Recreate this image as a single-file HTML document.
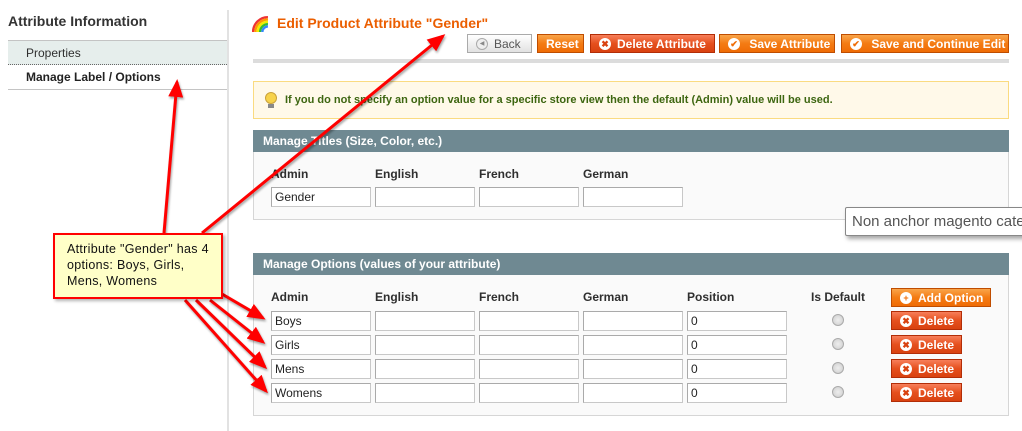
<!DOCTYPE html>
<html><head><meta charset="utf-8"><style>
*{margin:0;padding:0;box-sizing:border-box}
body{width:1022px;height:431px;overflow:hidden;background:#fff;font-family:"Liberation Sans",Arial,sans-serif;position:relative}
.a{position:absolute}
.b{font-weight:bold}
.btn{position:absolute;top:34px;height:19px;border:1px solid #bf4d00;background:linear-gradient(#f9a54a,#f47b14 50%,#ef6c05);color:#fff;font-weight:bold;font-size:12px;padding-left:8px;white-space:nowrap;display:flex;align-items:center}
.red{background:linear-gradient(#f77f5a,#e5501e 50%,#d94210);border-color:#b22d07}
.ic{display:inline-block;flex:none;width:12px;height:12px;border-radius:50%;background:#fff;margin-right:6px;color:#ef6c05;font-size:9px;line-height:12px;text-align:center}
.hd{position:absolute;left:253px;width:756px;height:22px;background:#6f8992;color:#fff;font-weight:bold;font-size:12px;line-height:22px;padding-left:10px}
.bd{position:absolute;left:253px;width:756px;background:#fafafa;border:1px solid #d6d6d6;border-top:none}
.l{position:absolute;font-size:12px;font-weight:bold;color:#2f2f2f}
.in{position:absolute;height:20px;width:100px;border:1px solid #aaa;border-color:#aaa #c8c8c8 #c8c8c8 #aaa;background:#fff;font-size:12px;line-height:18px;padding-left:3px;color:#222}
.rd{position:absolute;width:12px;height:12px;border-radius:50%;border:1px solid #aaa;background:radial-gradient(#eee,#ccc)}
</style></head><body>
<div class="a" style="left:227px;top:10px;width:2px;height:421px;background:#e2e2e2"></div>
<div class="a b" style="left:8px;top:13px;font-size:14px;color:#333">Attribute Information</div>
<div class="a" style="left:8px;top:40px;width:219px;height:25px;background:#e6eeec;border-top:1px solid #c4c4c4;border-bottom:1px dotted #666;font-size:12px;line-height:24px;padding-left:18px;color:#2f2f2f">Properties</div>
<div class="a b" style="left:8px;top:65px;width:219px;height:25px;border-bottom:1px solid #c4c4c4;font-size:12px;line-height:25px;padding-left:18px;color:#222">Manage Label / Options</div>

<svg class="a" style="left:252px;top:15px" width="17" height="17" viewBox="0 0 16 16"><g fill="none" stroke-width="2.2"><path d="M1 16A14 14 0 0 1 15 2" stroke="#e33"/><path d="M3.2 16A11.8 11.8 0 0 1 15 4.2" stroke="#f90"/><path d="M5.4 16A9.6 9.6 0 0 1 15 6.4" stroke="#ee0"/><path d="M7.6 16A7.4 7.4 0 0 1 15 8.6" stroke="#3b3"/><path d="M9.8 16A5.2 5.2 0 0 1 15 10.8" stroke="#38f"/></g></svg>
<div class="a b" style="left:277px;top:15px;font-size:14px;color:#eb5e00">Edit Product Attribute "Gender"</div>

<div class="btn" style="left:467px;width:65px;background:linear-gradient(#fff,#e2e2e2);border-color:#aaa;color:#555;font-weight:normal"><span class="ic" style="border:1px solid #aaa;background:#eee;color:#888;font-size:6px;line-height:10px">◀</span>Back</div>
<div class="btn" style="left:537px;width:47px">Reset</div>
<div class="btn red" style="left:590px;width:125px"><span class="ic" style="color:#d94210">✖</span>Delete Attribute</div>
<div class="btn" style="left:719px;width:116px"><span class="ic">✔</span>&nbsp;Save Attribute</div>
<div class="btn" style="left:841px;width:168px"><span class="ic">✔</span>&nbsp;Save and Continue Edit</div>
<div class="a" style="left:253px;top:59px;width:756px;height:4px;background:#dcdcdc"></div>

<div class="a" style="left:253px;top:81px;width:756px;height:38px;background:#fff9e9;border:1px solid #fadb81"></div>
<div class="a" style="left:265px;top:92px;width:12px;height:12px;border-radius:50%;background:#f7d24a;border:1px solid #c9a13a"></div>
<div class="a" style="left:268px;top:104px;width:6px;height:4px;background:#888"></div>
<div class="a b" style="left:285px;top:94px;font-size:11px;color:#3d6611">If you do not specify an option value for a specific store view then the default (Admin) value will be used.</div>

<div class="hd" style="top:130px">Manage Titles (Size, Color, etc.)</div>
<div class="bd" style="top:152px;height:68px"></div>
<div class="l" style="left:271px;top:167px">Admin</div><div class="l" style="left:375px;top:167px">English</div><div class="l" style="left:479px;top:167px">French</div><div class="l" style="left:583px;top:167px">German</div>
<div class="in" style="left:271px;top:187px">Gender</div><div class="in" style="left:375px;top:187px"></div><div class="in" style="left:479px;top:187px"></div><div class="in" style="left:583px;top:187px"></div>

<div class="a" style="left:845px;top:207px;width:190px;height:29px;background:#fff;border:1px solid #888;border-radius:2px;box-shadow:2px 3px 4px rgba(0,0,0,.35);font-size:15px;line-height:27px;padding-left:6px;color:#555;white-space:nowrap">Non anchor magento cate</div>

<div class="hd" style="top:253px">Manage Options (values of your attribute)</div>
<div class="bd" style="top:275px;height:141px"></div>
<div class="l" style="left:271px;top:290px">Admin</div><div class="l" style="left:375px;top:290px">English</div><div class="l" style="left:479px;top:290px">French</div><div class="l" style="left:583px;top:290px">German</div><div class="l" style="left:687px;top:290px">Position</div><div class="l" style="left:811px;top:290px">Is Default</div>
<div class="btn" style="left:891px;top:288px;width:100px"><span class="ic">+</span>Add Option</div>

<div class="in" style="left:271px;top:311px">Boys</div><div class="in" style="left:375px;top:311px"></div><div class="in" style="left:479px;top:311px"></div><div class="in" style="left:583px;top:311px"></div><div class="in" style="left:687px;top:311px">0</div><div class="rd" style="left:832px;top:314px"></div><div class="btn red" style="left:891px;top:311px;width:71px"><span class="ic" style="color:#d94210">✖</span>Delete</div>
<div class="in" style="left:271px;top:335px">Girls</div><div class="in" style="left:375px;top:335px"></div><div class="in" style="left:479px;top:335px"></div><div class="in" style="left:583px;top:335px"></div><div class="in" style="left:687px;top:335px">0</div><div class="rd" style="left:832px;top:338px"></div><div class="btn red" style="left:891px;top:335px;width:71px"><span class="ic" style="color:#d94210">✖</span>Delete</div>
<div class="in" style="left:271px;top:359px">Mens</div><div class="in" style="left:375px;top:359px"></div><div class="in" style="left:479px;top:359px"></div><div class="in" style="left:583px;top:359px"></div><div class="in" style="left:687px;top:359px">0</div><div class="rd" style="left:832px;top:362px"></div><div class="btn red" style="left:891px;top:359px;width:71px"><span class="ic" style="color:#d94210">✖</span>Delete</div>
<div class="in" style="left:271px;top:383px">Womens</div><div class="in" style="left:375px;top:383px"></div><div class="in" style="left:479px;top:383px"></div><div class="in" style="left:583px;top:383px"></div><div class="in" style="left:687px;top:383px">0</div><div class="rd" style="left:832px;top:386px"></div><div class="btn red" style="left:891px;top:383px;width:71px"><span class="ic" style="color:#d94210">✖</span>Delete</div>

<svg class="a" style="left:0;top:0" width="1022" height="431">
<defs><marker id="h" markerWidth="6" markerHeight="5" refX="5" refY="2.5" orient="auto" markerUnits="strokeWidth"><path d="M0 0L6 2.5L0 5z" fill="#f00"/></marker></defs>
<g stroke="#f00" stroke-width="3" fill="none" marker-end="url(#h)" style="filter:drop-shadow(1px 2px 1px rgba(0,0,0,.35))">
<line x1="164" y1="233" x2="177" y2="82"/>
<line x1="202" y1="233" x2="443" y2="36"/>
<line x1="222" y1="294" x2="263" y2="318"/>
<line x1="210" y1="300" x2="263" y2="342"/>
<line x1="196" y1="300" x2="265" y2="367"/>
<line x1="185" y1="300" x2="266" y2="391"/>
</g>
</svg>
<div class="a" style="left:53px;top:233px;width:170px;height:66px;background:#ffffc8;border:2px solid #f00;box-shadow:2px 2px 3px rgba(0,0,0,.3);font-size:12.5px;line-height:16px;padding:6px 0 0 12px;color:#111;letter-spacing:0.3px;white-space:nowrap">Attribute "Gender" has 4<br>options: Boys, Girls,<br>Mens, Womens</div>
</body></html>
